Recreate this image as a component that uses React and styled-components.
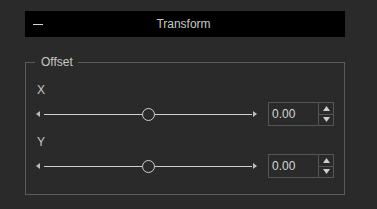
import React from "react";
import styled, { createGlobalStyle } from "styled-components";

const Global = createGlobalStyle`
  html, body { margin: 0; padding: 0; background: #2a2a2a; }
  body { font-family: "Liberation Sans", Arial, sans-serif; }
`;

const Panel = styled.div`
  width: 320px;
  margin-left: 25px;
  padding-top: 11px;
`;

const Header = styled.div`
  height: 26px;
  background: #000;
  display: flex;
  align-items: center;
  padding: 0 0 0 8px;
  box-sizing: border-box;
`;

const Collapse = styled.span`
  display: block;
  width: 10px;
  height: 1px;
  background: #d4d4d4;
  flex: none;
`;

const Title = styled.span`
  flex: 1;
  text-align: center;
  font-size: 12px;
  color: #c8c8c8;
  padding-right: 21px;
`;

const Group = styled.fieldset`
  margin: 18px 0 0;
  padding: 0 10px 16px;
  border: 1px solid #5a5a5a;
  min-width: 0;
  width: 320px;
  box-sizing: border-box;
`;

const Legend = styled.legend`
  margin-left: -1px;
  padding: 0 5px 0 6px;
  font-size: 12px;
  line-height: 14px;
  color: #c8c8c8;
`;

const Axis = styled.div`
  display: flex;
  flex-direction: column;
  gap: 5px;
  margin-top: ${(p) => p.$top}px;
`;

const AxisLabel = styled.div`
  font-size: 12px;
  line-height: 14px;
  color: #c8c8c8;
  padding-left: 1px;
`;

const Row = styled.div`
  display: flex;
  align-items: center;
  height: 24px;
`;

const Arrow = styled.svg`
  flex: none;
  width: 4px;
  height: 6px;
  display: block;
`;

const Track = styled.div`
  position: relative;
  flex: 1;
  height: 1px;
  background: #cfcfcf;
  margin: 0 1px 0 4px;
`;

const Thumb = styled.div`
  position: absolute;
  top: 50%;
  left: 50%;
  width: 11px;
  height: 11px;
  margin: -6px 0 0 -6px;
  border: 1.5px solid #cfcfcf;
  border-radius: 50%;
  background: #2a2a2a;
`;

const Spin = styled.div`
  flex: none;
  display: flex;
  width: 66px;
  height: 24px;
  margin-left: 11px;
  border: 1px solid #555;
  box-sizing: border-box;
`;

const Value = styled.div`
  flex: 1;
  display: flex;
  align-items: center;
  padding-left: 3px;
  font-size: 12px;
  color: #d6d6d6;
`;

const Buttons = styled.div`
  flex: none;
  width: 14px;
  display: flex;
  flex-direction: column;
  border-left: 1px solid #555;
`;

const SpinButton = styled.div`
  flex: 1;
  display: flex;
  align-items: center;
  justify-content: center;
  border-top: ${(p) => (p.$lower ? "1px solid #555" : "none")};
`;

const Tri = ({ dir }) => (
  <svg width="7" height="5" viewBox="0 0 7 5" style={{ display: "block" }}>
    {dir === "up" ? (
      <polygon points="3.5,0 7,5 0,5" fill="#cfcfcf" />
    ) : (
      <polygon points="0,0 7,0 3.5,5" fill="#cfcfcf" />
    )}
  </svg>
);

function SliderAxis({ label, value, top }) {
  return (
    <Axis $top={top}>
      <AxisLabel>{label}</AxisLabel>
      <Row>
        <Arrow viewBox="0 0 4 6">
          <polygon points="4,0 4,6 0,3" fill="#bdbdbd" />
        </Arrow>
        <Track>
          <Thumb />
        </Track>
        <Arrow viewBox="0 0 4 6">
          <polygon points="0,0 0,6 4,3" fill="#bdbdbd" />
        </Arrow>
        <Spin>
          <Value>{value}</Value>
          <Buttons>
            <SpinButton>
              <Tri dir="up" />
            </SpinButton>
            <SpinButton $lower>
              <Tri dir="down" />
            </SpinButton>
          </Buttons>
        </Spin>
      </Row>
    </Axis>
  );
}

export default function App() {
  return (
    <>
      <Global />
      <Panel>
        <Header>
          <Collapse />
          <Title>Transform</Title>
        </Header>
        <Group>
          <Legend>Offset</Legend>
          <SliderAxis label="X" value="0.00" top={14} />
          <SliderAxis label="Y" value="0.00" top={9} />
        </Group>
      </Panel>
    </>
  );
}
